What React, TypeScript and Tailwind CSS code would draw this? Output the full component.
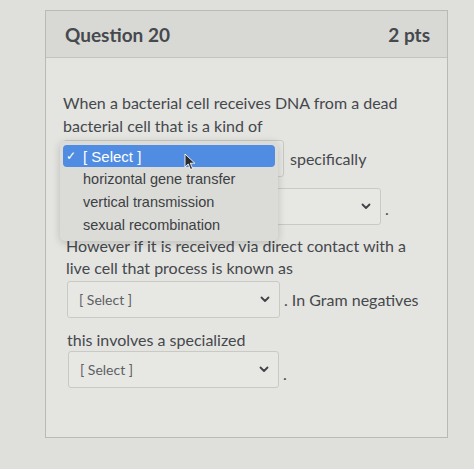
const options = ['horizontal gene transfer', 'vertical transmission', 'sexual recombination']

function Chevron() {
  return (
    <svg width="10" height="7" viewBox="0 0 10 7" className="shrink-0">
      <path d="M1.5 1.5 L5 5 L8.5 1.5" fill="none" stroke="#3f4247" strokeWidth="1.8" strokeLinecap="round" strokeLinejoin="round" />
    </svg>
  )
}

function SelectBox({ width, label = true }: { width: string; label?: boolean }) {
  return (
    <div className={`${width} flex h-[37px] shrink-0 items-center justify-between rounded-[3px] border border-[#c9c9c5] bg-[#e7e7e3] pl-[11px] pr-[9px]`}>
      <span className="text-[14px] text-[#5d6065]">{label ? '[ Select ]' : ''}</span>
      <Chevron />
    </div>
  )
}

export default function App() {
  return (
    <div className="h-[469px] w-[474px] bg-[#dfdfdb] pl-[45px] pt-[10px]" style={{ fontFamily: 'Lato, "Open Sans", sans-serif' }}>
      <div className="h-[428px] w-[403px] border border-[#b9b9b5] bg-[#e4e4e0]">
        <div className="flex h-[47px] items-center justify-between border-b border-[#c2c2be] bg-[#d8d8d4] pl-[19px] pr-[17px] pt-[2px]">
          <h2 className="text-[19px] font-bold text-[#46494e]">Question 20</h2>
          <span className="text-[19px] font-bold text-[#46494e]">2 pts</span>
        </div>

        <div className="relative pl-[17px] pr-[12px] pt-[33px] text-[16px] leading-[23px] text-[#45484d]">
          <p>When a bacterial cell receives DNA from a dead bacterial cell that is a kind of</p>

          <div className="mt-[3px] flex items-center gap-[6px]">
            <SelectBox width="w-[221px]" label={false} />
            <span>specifically</span>
          </div>

          <div className="mt-[11px] flex items-end gap-[4px]">
            <SelectBox width="w-[318px]" label={false} />
            <span className="pb-[5px]">.</span>
          </div>

          <p className="mt-[10px] max-w-[345px] pl-[3px] leading-[22px]">However if it is received via direct contact with a live cell that process is known as</p>

          <div className="mt-[2px] flex items-center gap-[4px] pl-[4px]">
            <SelectBox width="w-[213px]" />
            <span>. In Gram negatives</span>
          </div>

          <p className="mt-[10px] pl-[4px]">this involves a specialized</p>

          <div className="flex items-end gap-[4px] pl-[5px]">
            <SelectBox width="w-[211px]" />
            <span className="pb-[3px]">.</span>
          </div>

          <div className="absolute left-[14px] top-[83px] w-[218px] rounded-[5px] bg-[#dbdbd7] px-[3px] pb-[4px] pt-[4px] shadow-[0_2px_8px_rgba(0,0,0,0.18)]" style={{ fontFamily: '"Liberation Sans", Arial, sans-serif' }}>
            <div className="relative mb-[1px] flex h-[22px] items-center rounded-[4px] bg-[#4f8ce2] pl-[3px] text-[15px] text-white">
              <span className="w-[17px] text-[12px]">✓</span>
              <span>[ Select ]</span>
              <svg width="12" height="18" viewBox="0 0 12 18" className="absolute left-[121px] top-[8px]">
                <path d="M1 1 L1 14 L4.2 11 L6.5 16.5 L8.6 15.6 L6.3 10.2 L10.8 10.2 Z" fill="#2b2b2b" stroke="#fff" strokeWidth="0.9" />
              </svg>
            </div>
            {options.map((o) => (
              <div key={o} className="flex h-[23px] items-center pl-[20px] text-[14.5px] text-[#3c3f44]">
                {o}
              </div>
            ))}
          </div>
        </div>
      </div>
    </div>
  )
}
